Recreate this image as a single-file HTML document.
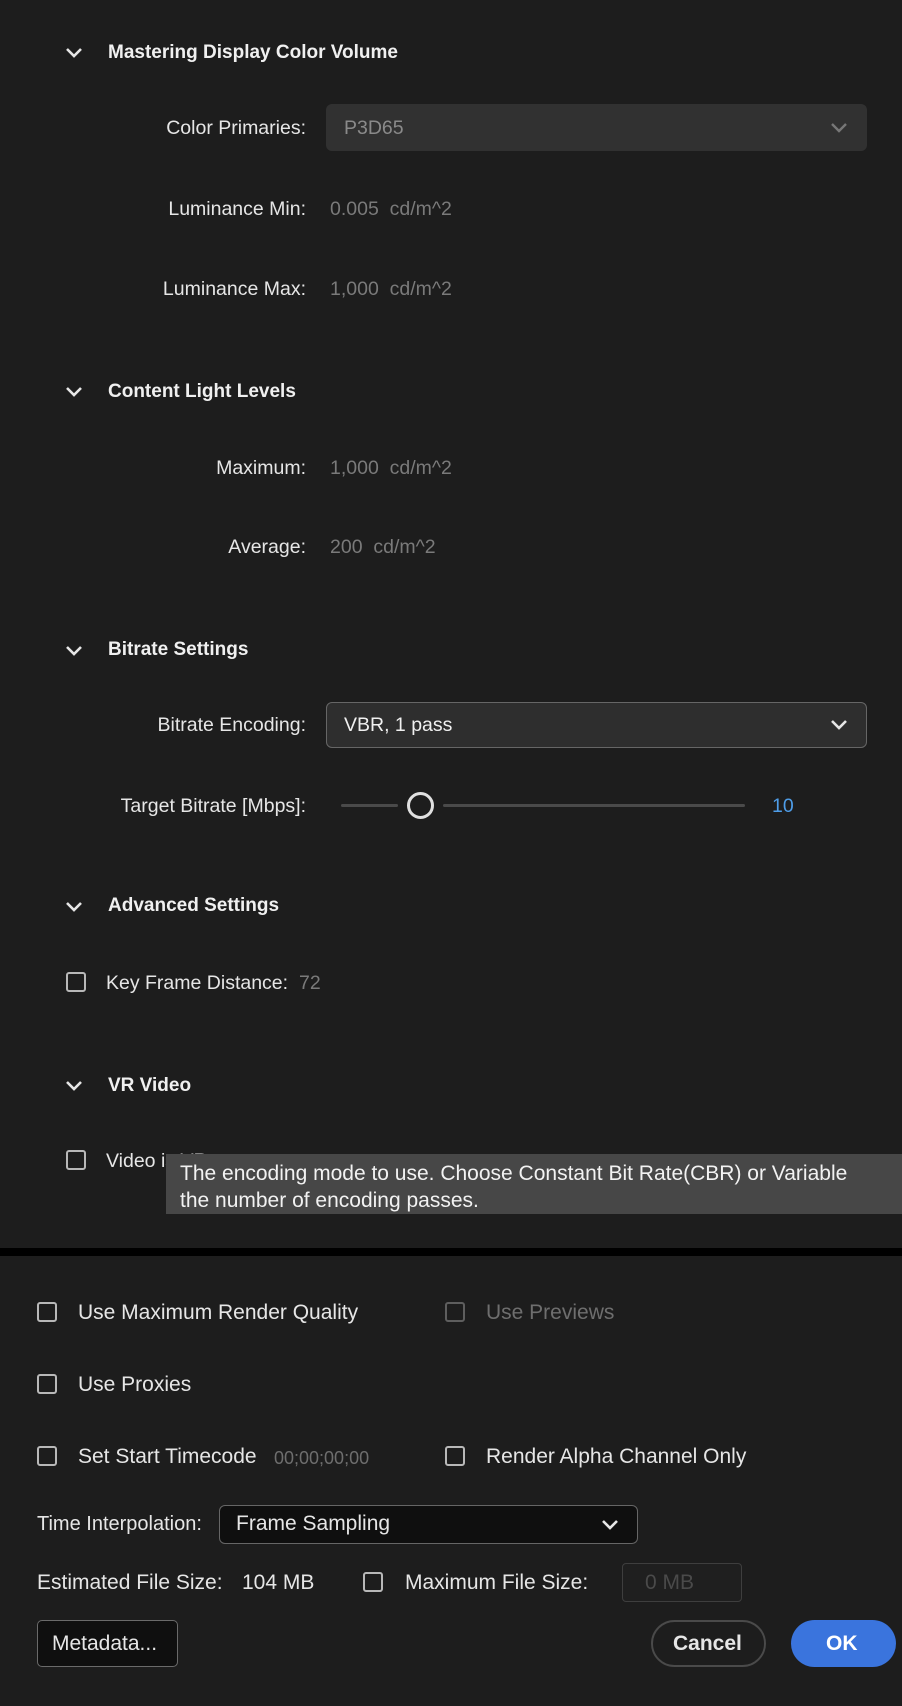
<!DOCTYPE html>
<html><head><style>
*{margin:0;padding:0;box-sizing:border-box}
body{width:902px;height:1706px;background:#1d1d1d;font-family:"Liberation Sans",sans-serif;color:#e6e6e6;position:relative;overflow:hidden;font-size:19.5px}
.a{position:absolute;white-space:nowrap;line-height:22px}
.h{font-weight:bold;font-size:19px;color:#f0f0f0}
.lab{text-align:right;width:306px;left:0}
.g{color:#7a7a7a}
.cb{position:absolute;width:20px;height:20px;border:2px solid #b8b8b8;border-radius:3px}
.cb.d{border-color:#5e5e5e}
.chev{position:absolute;width:20px;height:12px}
.dd{position:absolute;border-radius:6px}
.b{font-size:21px}
</style></head><body>
<svg class="chev" style="left:64px;top:47px" viewBox="0 0 20 12"><path d="M3 2L10 9L17 2" fill="none" stroke="#e6e6e6" stroke-width="2.6"/></svg>
<div class="a h" style="left:108px;top:42px">Mastering Display Color Volume</div>
<div class="a lab" style="top:117px">Color Primaries:</div>
<div class="dd" style="left:326px;top:104px;width:541px;height:47px;background:#313131"></div>
<div class="a g" style="left:344px;top:117px;color:#8a8a8a">P3D65</div>
<svg class="chev" style="left:829px;top:122px" viewBox="0 0 20 12"><path d="M3 2L10 9L17 2" fill="none" stroke="#777" stroke-width="2.4"/></svg>
<div class="a lab" style="top:198px">Luminance Min:</div>
<div class="a g" style="left:330px;top:198px">0.005&nbsp; cd/m^2</div>
<div class="a lab" style="top:278px">Luminance Max:</div>
<div class="a g" style="left:330px;top:278px">1,000&nbsp; cd/m^2</div>

<svg class="chev" style="left:64px;top:386px" viewBox="0 0 20 12"><path d="M3 2L10 9L17 2" fill="none" stroke="#e6e6e6" stroke-width="2.6"/></svg>
<div class="a h" style="left:108px;top:381px">Content Light Levels</div>
<div class="a lab" style="top:457px">Maximum:</div>
<div class="a g" style="left:330px;top:457px">1,000&nbsp; cd/m^2</div>
<div class="a lab" style="top:536px">Average:</div>
<div class="a g" style="left:330px;top:536px">200&nbsp; cd/m^2</div>

<svg class="chev" style="left:64px;top:645px" viewBox="0 0 20 12"><path d="M3 2L10 9L17 2" fill="none" stroke="#e6e6e6" stroke-width="2.6"/></svg>
<div class="a h" style="left:108px;top:639px">Bitrate Settings</div>
<div class="a lab" style="top:714px">Bitrate Encoding:</div>
<div class="dd" style="left:326px;top:702px;width:541px;height:46px;background:#2e2e2e;border:1.5px solid #666"></div>
<div class="a" style="left:344px;top:714px;color:#f0f0f0">VBR, 1 pass</div>
<svg class="chev" style="left:829px;top:719px" viewBox="0 0 20 12"><path d="M3 2L10 9L17 2" fill="none" stroke="#e6e6e6" stroke-width="2.6"/></svg>
<div class="a lab" style="top:795px">Target Bitrate [Mbps]:</div>
<div style="position:absolute;left:341px;top:804px;width:57px;height:3px;background:#4a4a4a;border-radius:2px"></div>
<div style="position:absolute;left:443px;top:804px;width:302px;height:3px;background:#4a4a4a;border-radius:2px"></div>
<div style="position:absolute;left:407px;top:792px;width:27px;height:27px;border:3px solid #e0e0e0;border-radius:50%"></div>
<div class="a" style="left:772px;top:795px;color:#4e9de8">10</div>

<svg class="chev" style="left:64px;top:901px" viewBox="0 0 20 12"><path d="M3 2L10 9L17 2" fill="none" stroke="#e6e6e6" stroke-width="2.6"/></svg>
<div class="a h" style="left:108px;top:895px">Advanced Settings</div>
<div class="cb" style="left:66px;top:972px"></div>
<div class="a" style="left:106px;top:972px">Key Frame Distance:</div>
<div class="a g" style="left:299px;top:972px">72</div>

<svg class="chev" style="left:64px;top:1080px" viewBox="0 0 20 12"><path d="M3 2L10 9L17 2" fill="none" stroke="#e6e6e6" stroke-width="2.6"/></svg>
<div class="a h" style="left:108px;top:1075px">VR Video</div>
<div class="cb" style="left:66px;top:1150px"></div>
<div class="a" style="left:106px;top:1150px">Video is VR</div>
<div style="position:absolute;left:166px;top:1154px;width:740px;height:60px;background:#474747"></div>
<div class="a" style="left:180px;top:1160px;font-size:21px;line-height:27px;color:#f2f2f2">The encoding mode to use. Choose Constant Bit Rate(CBR) or Variable<br>the number of encoding passes.</div>

<div style="position:absolute;left:0;top:1248px;width:902px;height:8px;background:#000"></div>

<div class="cb" style="left:37px;top:1302px"></div>
<div class="a b" style="left:78px;top:1302px">Use Maximum Render Quality</div>
<div class="cb d" style="left:445px;top:1302px"></div>
<div class="a b" style="left:486px;top:1302px;color:#6e6e6e">Use Previews</div>
<div class="cb" style="left:37px;top:1374px"></div>
<div class="a b" style="left:78px;top:1374px">Use Proxies</div>
<div class="cb" style="left:37px;top:1446px"></div>
<div class="a b" style="left:78px;top:1446px">Set Start Timecode</div>
<div class="a" style="left:274px;top:1447px;font-size:18px;color:#6e6e6e">00;00;00;00</div>
<div class="cb" style="left:445px;top:1446px"></div>
<div class="a b" style="left:486px;top:1446px">Render Alpha Channel Only</div>

<div class="a" style="left:37px;top:1513px;font-size:20px">Time Interpolation:</div>
<div class="dd" style="left:219px;top:1505px;width:419px;height:39px;background:#0f0f0f;border:1.5px solid #666"></div>
<div class="a b" style="left:236px;top:1513px">Frame Sampling</div>
<svg class="chev" style="left:600px;top:1519px" viewBox="0 0 20 12"><path d="M3 2L10 9L17 2" fill="none" stroke="#e6e6e6" stroke-width="2.6"/></svg>

<div class="a b" style="left:37px;top:1572px">Estimated File Size:</div>
<div class="a b" style="left:242px;top:1572px">104 MB</div>
<div class="cb" style="left:363px;top:1572px"></div>
<div class="a b" style="left:405px;top:1572px">Maximum File Size:</div>
<div class="dd" style="left:622px;top:1563px;width:120px;height:39px;background:#1f1f1f;border:1.5px solid #3e3e3e;border-radius:4px"></div>
<div class="a b" style="left:645px;top:1572px;color:#4a4a4a">0 MB</div>

<div class="dd" style="left:37px;top:1620px;width:141px;height:47px;background:#0f0f0f;border:1.5px solid #6a6a6a;border-radius:5px"></div>
<div class="a b" style="left:52px;top:1633px">Metadata...</div>
<div class="dd" style="left:651px;top:1620px;width:115px;height:47px;border:2.5px solid #4a4a4a;border-radius:24px"></div>
<div class="a" style="left:673px;top:1633px;font-size:21px;font-weight:bold">Cancel</div>
<div class="dd" style="left:791px;top:1620px;width:105px;height:47px;background:#3a74dd;border-radius:24px"></div>
<div class="a" style="left:826px;top:1633px;font-size:21px;font-weight:bold;color:#fff">OK</div>
</body></html>
